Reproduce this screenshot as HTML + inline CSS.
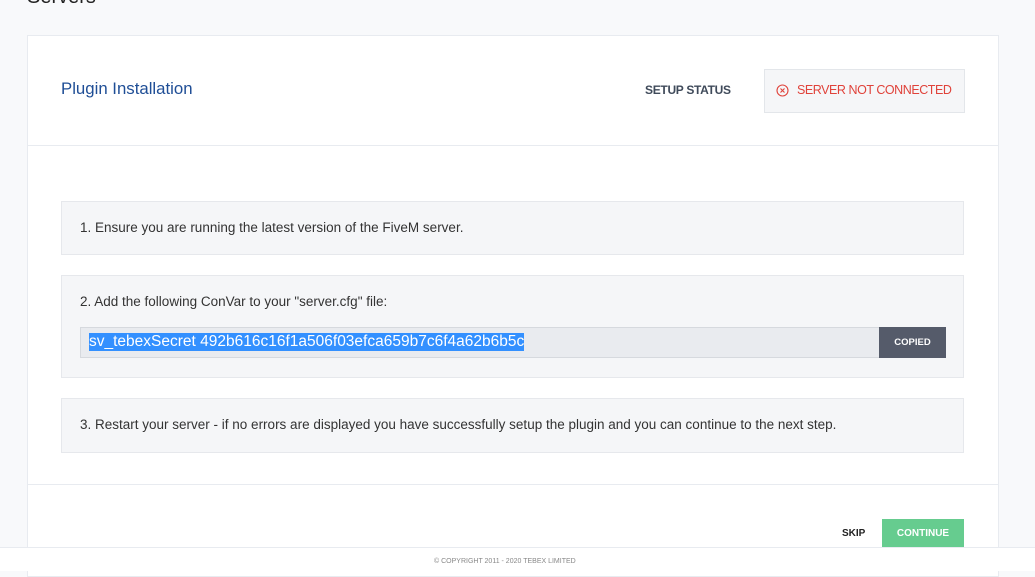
<html><head><style>
body{margin:0;width:1035px;height:571px;background:#f8f9fb;font-family:"Liberation Sans",sans-serif;position:relative;overflow:hidden;color:#333}
.a{position:absolute}
h1{position:absolute;left:27px;top:-14px;margin:0;font-weight:normal;font-size:20px;color:#222}
.card{left:27px;top:35px;width:970px;height:540px;background:#fff;border:1px solid #e8ebf0}
.box{position:absolute;left:61px;width:901px;background:#f5f6f8;border:1px solid #e6e8ec;font-size:13.5px;color:#333}
</style></head><body>
<h1>Servers</h1>
<div class="a card"></div>
<div class="a" style="left:28px;top:145px;width:970px;height:1px;background:#e8ebf0"></div>
<div class="a" style="left:61px;top:79px;font-size:16.8px;color:#1f4e96">Plugin Installation</div>
<div class="a" style="left:645px;top:83px;font-size:12px;font-weight:bold;color:#3f4a5a;letter-spacing:-0.3px">SETUP STATUS</div>
<div class="a" style="left:764px;top:69px;width:199px;height:42px;background:#f5f6f8;border:1px solid #e3e6ea"></div>
<svg class="a" style="left:776px;top:84px" width="13" height="13" viewBox="0 0 13 13"><circle cx="6.5" cy="6.5" r="5.5" fill="none" stroke="#e0423a" stroke-width="1.1"/><path d="M4.5 4.5l4 4M8.5 4.5l-4 4" stroke="#e0423a" stroke-width="1.1"/></svg>
<div class="a" style="left:797px;top:83px;font-size:12.5px;color:#e0423a;letter-spacing:-0.45px">SERVER NOT CONNECTED</div>
<div class="box" style="top:201px;height:52px"><div class="a" style="left:18px;top:18px">1. Ensure you are running the latest version of the FiveM server.</div></div>
<div class="box" style="top:275px;height:101px"><div class="a" style="left:18px;top:18px">2. Add the following ConVar to your "server.cfg" file:</div>
<div class="a" style="left:18px;top:51px;width:798px;height:29px;background:#e9ebef;border:1px solid #d6d9de"><span class="a" style="left:8px;top:5px;background:#3390ff;color:#fff;font-size:15.5px;line-height:18px">sv_tebexSecret 492b616c16f1a506f03efca659b7c6f4a62b6b5c</span></div>
<div class="a" style="left:817px;top:51px;width:67px;height:31px;background:#555b6a;color:#fff;font-size:9.5px;font-weight:bold;text-align:center;line-height:31px">COPIED</div></div>
<div class="box" style="top:398px;height:53px"><div class="a" style="left:18px;top:18px;font-size:13.5px">3. Restart your server - if no errors are displayed you have successfully setup the plugin and you can continue to the next step.</div></div>
<div class="a" style="left:28px;top:484px;width:970px;height:1px;background:#e8ebf0"></div>
<div class="a" style="left:842px;top:528px;font-size:10px;font-weight:bold;color:#222">SKIP</div>
<div class="a" style="left:882px;top:519px;width:82px;height:28px;background:#66cc8f;color:#fff;font-size:10px;font-weight:bold;text-align:center;line-height:29px">CONTINUE</div>
<div class="a" style="left:0;top:547px;width:1035px;height:23px;background:#fff;border-top:1px solid #e8ebf0"></div>
<div class="a" style="left:434px;top:558px;font-size:7px;color:#888">© COPYRIGHT 2011 - 2020 TEBEX LIMITED</div>
</body></html>
